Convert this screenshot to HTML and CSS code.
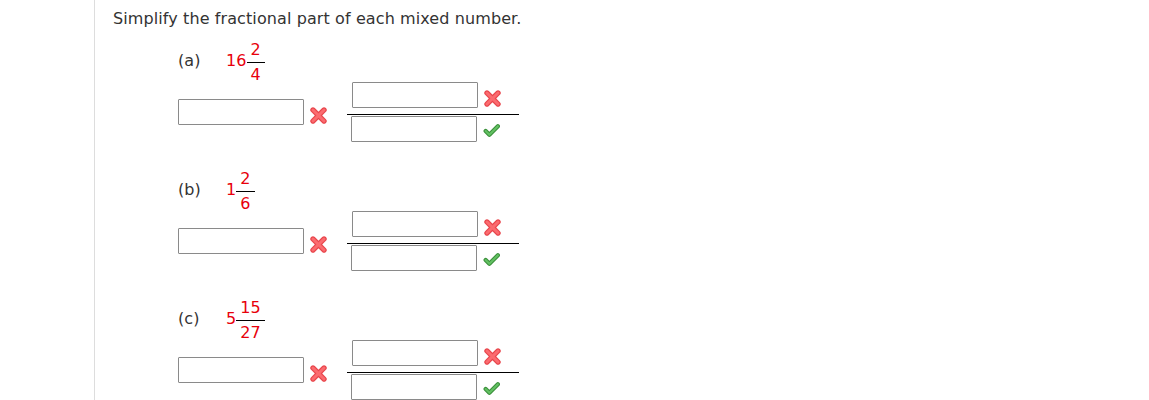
FILE: index.html
```html
<html>
  <head>
    <link rel="stylesheet" href="styles.css">
  </head>
  <body>
    <svg width="0" height="0" class="defs">
      <defs>
        <symbol id="icon-wrong" viewBox="0 0 16 16">
          <path d="M2.8 2.8L13.2 13.2M13.2 2.8L2.8 13.2" stroke="#e8464c" stroke-width="5" stroke-linecap="round"/>
          <path d="M2.8 2.8L13.2 13.2M13.2 2.8L2.8 13.2" stroke="#fb6b6f" stroke-width="2.8" stroke-linecap="round"/>
        </symbol>
        <symbol id="icon-right" viewBox="0 0 16 16">
          <path d="M2.5 8.5L6 12L14 4" fill="none" stroke="#3a8f3a" stroke-width="4" stroke-linecap="round" stroke-linejoin="round"/>
          <path d="M2.5 8.5L6 12L14 4" fill="none" stroke="#62c062" stroke-width="2" stroke-linecap="round" stroke-linejoin="round"/>
        </symbol>
      </defs>
    </svg>
    <main class="question">
      <p class="prompt">Simplify the fractional part of each mixed number.</p>

      <section class="part">
        <div class="given">
          <span class="label">(a)</span>
          <span class="mixed"><span class="whole">16</span><span class="frac"><span class="num">2</span><span class="den">4</span></span></span>
        </div>
        <div class="answer">
          <input type="text" class="box">
          <svg class="mark"><use href="#icon-wrong"/></svg>
          <div class="ans-frac">
            <div class="ans-num">
              <input type="text" class="box">
              <svg class="mark"><use href="#icon-wrong"/></svg>
            </div>
            <div class="ans-den">
              <input type="text" class="box">
              <svg class="mark"><use href="#icon-right"/></svg>
            </div>
          </div>
        </div>
      </section>

      <section class="part">
        <div class="given">
          <span class="label">(b)</span>
          <span class="mixed"><span class="whole">1</span><span class="frac"><span class="num">2</span><span class="den">6</span></span></span>
        </div>
        <div class="answer">
          <input type="text" class="box">
          <svg class="mark"><use href="#icon-wrong"/></svg>
          <div class="ans-frac">
            <div class="ans-num">
              <input type="text" class="box">
              <svg class="mark"><use href="#icon-wrong"/></svg>
            </div>
            <div class="ans-den">
              <input type="text" class="box">
              <svg class="mark"><use href="#icon-right"/></svg>
            </div>
          </div>
        </div>
      </section>

      <section class="part">
        <div class="given">
          <span class="label">(c)</span>
          <span class="mixed"><span class="whole">5</span><span class="frac"><span class="num">15</span><span class="den">27</span></span></span>
        </div>
        <div class="answer">
          <input type="text" class="box">
          <svg class="mark"><use href="#icon-wrong"/></svg>
          <div class="ans-frac">
            <div class="ans-num">
              <input type="text" class="box">
              <svg class="mark"><use href="#icon-wrong"/></svg>
            </div>
            <div class="ans-den">
              <input type="text" class="box">
              <svg class="mark"><use href="#icon-right"/></svg>
            </div>
          </div>
        </div>
      </section>
    </main>
  </body>
</html>
```

FILE: styles.css
```css
:root {
  --text-color: #333;
  --given-color: #e8000b;
  --rule-color: #ddd;
  --box-border: #8a8a8a;
}

html {
  background: #fff;
}

body {
  margin: 0;
  font-family: "DejaVu Sans", Verdana, sans-serif;
  font-size: 16px;
  letter-spacing: 0.1px;
  color: var(--text-color);
}

.defs {
  position: absolute;
}

.question {
  margin-left: 94px;
  border-left: 1px solid var(--rule-color);
  padding: 10px 0 0 18px;
  min-height: 400px;
  box-sizing: border-box;
}

.prompt {
  margin: 0;
  line-height: 18px;
}

.part {
  padding-left: 65px;
}

.given {
  display: flex;
  align-items: center;
  height: 40px;
  margin-top: 14px;
}

.part + .part .given {
  margin-top: 29px;
}

.label {
  width: 48px;
  padding-bottom: 3px;
}

.mixed {
  display: inline-flex;
  align-items: center;
  color: var(--given-color);
}

.whole {
  padding-bottom: 3px;
}

.frac {
  display: inline-flex;
  flex-direction: column;
  text-align: center;
  line-height: 15px;
}

.num {
  border-bottom: 1px solid #000;
  padding: 0 4px 5px;
}

.den {
  padding: 4px 4px 0;
}

.answer {
  display: flex;
  align-items: center;
}

.box {
  width: 126px;
  height: 26px;
  box-sizing: border-box;
  border: 1px solid var(--box-border);
  border-radius: 1px;
  margin: 0;
  padding: 0 4px;
  font: inherit;
}

.mark {
  width: 17px;
  height: 17px;
  margin-left: 6px;
}

.answer > .mark {
  margin-top: 6px;
}

.ans-frac {
  display: flex;
  flex-direction: column;
  margin-left: 20px;
  width: 172px;
}

.ans-num {
  display: flex;
  align-items: center;
  padding: 0 0 6px 5px;
  border-bottom: 1px solid #000;
}

.ans-num .mark {
  margin-top: 6px;
}

.ans-den {
  display: flex;
  align-items: center;
  padding: 1px 0 0 4px;
}

.ans-den .mark {
  margin-top: 2px;
}
```
